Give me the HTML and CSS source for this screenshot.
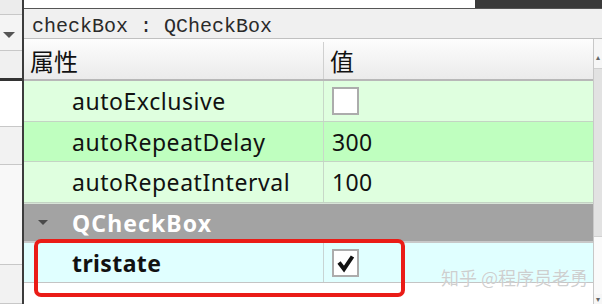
FILE: index.html
```html
<!DOCTYPE html>
<html>
<head>
  <title>属性编辑器</title>
  <link rel="stylesheet" href="styles.css">
</head>
<body>
  <div class="side">
    <div class="side-top"></div>
    <div class="side-combo"><span class="combo-arrow"></span></div>
    <div class="side-gap"></div>
    <div class="side-white"></div>
    <div class="side-row"></div>
    <div class="side-row tall"></div>
    <div class="side-row"></div>
  </div>

  <div class="main">
    <div class="topbar">
      <div class="topbar-field"></div>
      <div class="topbar-dark"></div>
    </div>
    <div class="title">checkBox : QCheckBox</div>

    <div class="grid">
      <div class="table">
        <div class="row head">
          <div class="cell name">属性</div>
          <div class="cell value">值</div>
        </div>
        <div class="row even">
          <div class="cell name">autoExclusive</div>
          <div class="cell value"><span class="check"></span></div>
        </div>
        <div class="row odd">
          <div class="cell name">autoRepeatDelay</div>
          <div class="cell value">300</div>
        </div>
        <div class="row even">
          <div class="cell name">autoRepeatInterval</div>
          <div class="cell value">100</div>
        </div>
        <div class="row group">
          <div class="cell name"><span class="group-arrow"></span>QCheckBox</div>
        </div>
        <div class="row own">
          <div class="cell name">tristate</div>
          <div class="cell value">
            <span class="check">
              <svg width="22" height="22" viewBox="0 0 22 22">
                <path d="M4 10.5 L9 17 L17.5 4.5" fill="none" stroke="#111" stroke-width="4" stroke-linejoin="miter"/>
              </svg>
            </span>
          </div>
        </div>
        <div class="row blank"></div>
      </div>

      <div class="scroll">
        <div class="scroll-up">▴</div>
        <div class="scroll-track"></div>
        <div class="scroll-rest"></div>
        <div class="scroll-down">▾</div>
      </div>
    </div>
  </div>

  <!-- highlight drawn over the tristate row -->
  <div class="marker"></div>
  <div class="watermark">知乎 @程序员老勇</div>
</body>
</html>
```

FILE: styles.css
```css
body {
  margin: 0;
  width: 602px;
  height: 304px;
  overflow: hidden;
  display: flex;
  position: relative;
  font-family: "Noto Sans", "Noto Sans CJK SC", sans-serif;
  color: #111;
  background: #fff;
}

/* left dock strip */
.side {
  width: 22px;
  border-right: 2px solid #3c3c3c;
  display: flex;
  flex-direction: column;
  background: #f0f0f0;
}

.side-top {
  height: 14px;
  background: #ececec;
  border-bottom: 1px solid #c8c8c8;
}

.side-combo {
  height: 35px;
  background: #f4f4f4;
  border-bottom: 1px solid #c8c8c8;
  display: flex;
  align-items: center;
  padding-left: 3px;
}

.combo-arrow {
  width: 0;
  height: 0;
  border-left: 6px solid transparent;
  border-right: 6px solid transparent;
  border-top: 6px solid #555;
  margin-top: 6px;
}

.side-gap {
  height: 28px;
  background: #f0f0f0;
  border-bottom: 3px solid #333;
}

.side-white {
  height: 45px;
  background: #fff;
  border-bottom: 1px solid #c8c8c8;
}

.side-row {
  height: 38px;
  background: #f2f2f2;
  border-bottom: 1px solid #c8c8c8;
}

.side-row.tall {
  height: 100px;
  background: #f8f8f8;
}

/* property editor */
.main {
  flex: 1;
  display: flex;
  flex-direction: column;
}

.topbar {
  height: 8px;
  display: flex;
  border-bottom: 1px solid #555;
}

.topbar-field {
  width: 451px;
  background: #fff;
}

.topbar-dark {
  flex: 1;
  background: #3a3a3a;
}

.title {
  height: 29px;
  line-height: 36px;
  padding-left: 8px;
  background: #f0f0f0;
  border-bottom: 1px solid #c0c0c0;
  font-family: "Liberation Mono", monospace;
  font-size: 20px;
  color: #2a2a2a;
  white-space: pre;
}

.grid {
  flex: 1;
  display: flex;
}

.table {
  width: 569px;
  display: flex;
  flex-direction: column;
}

.row {
  display: flex;
  box-sizing: border-box;
  height: 41px;
  border-bottom: 1px solid #c4d4c4;
  font-size: 23px;
  letter-spacing: 0.55px;
}

.cell {
  box-sizing: border-box;
  display: flex;
  align-items: center;
}

.cell.name {
  width: 300px;
  padding-left: 48px;
  border-right: 1px solid #c8d8c8;
}

.cell.value {
  flex: 1;
  padding-left: 8px;
  letter-spacing: 0.3px;
}

.row.head {
  height: 42px;
  border-bottom: 2px solid #b8b8b8;
  background: linear-gradient(#fdfdfd, #ebebeb);
  font-family: "Noto Sans CJK SC", sans-serif;
  font-size: 24px;
  letter-spacing: 0;
  padding-top: 3px;
}

.row.head .cell.name {
  padding-left: 6px;
  border-right: 1px solid #d0d0d0;
}

.row.head .cell.value {
  padding-left: 6px;
}

.row.even {
  background: #dfffdf;
}

.row.odd {
  height: 40px;
  background: #bfffbf;
}

.row.group {
  height: 40px;
  background: #a3a3a3;
  border-top: 1px solid #d8e4d8;
  border-bottom: 2px solid #c8c8c8;
  color: #fff;
  font-weight: bold;
  letter-spacing: 1.1px;
}

.row.group .cell.name {
  border-right: none;
  position: relative;
}

.group-arrow {
  position: absolute;
  left: 14px;
  top: 16px;
  width: 0;
  height: 0;
  border-left: 5px solid transparent;
  border-right: 5px solid transparent;
  border-top: 5px solid #4a4a4a;
}

.row.own {
  height: 40px;
  background: #e0ffff;
  border-bottom: 1px solid #c4c4c4;
  font-weight: bold;
  letter-spacing: 0.4px;
}

.row.own .cell.name {
  border-right: 1px solid #c8d4d4;
}

.row.blank {
  flex: 1;
  border-bottom: none;
  background: #fff;
}

.check {
  width: 27px;
  height: 28px;
  box-sizing: border-box;
  border: 2px solid #acacac;
  background: #fff;
  display: flex;
  align-items: center;
  justify-content: center;
}

/* scrollbar */
.scroll {
  flex: 1;
  border-left: 1px solid #c8c8c8;
  display: flex;
  flex-direction: column;
  background: #f6f6f6;
  font-size: 8px;
  color: #666;
  text-align: center;
}

.scroll-up {
  height: 29px;
  line-height: 36px;
}

.scroll-track {
  height: 167px;
  background: #e2e2e2;
  border-top: 1px solid #d0d0d0;
  border-bottom: 1px solid #d0d0d0;
}

.scroll-rest {
  flex: 1;
  background: #fafafa;
}

.scroll-down {
  height: 10px;
  line-height: 10px;
}

/* overlays */
.marker {
  position: absolute;
  left: 34px;
  top: 239px;
  width: 371px;
  height: 58px;
  box-sizing: border-box;
  border: 4px solid #ea1c17;
  border-radius: 7px;
}

.watermark {
  position: absolute;
  left: 441px;
  top: 264px;
  font-family: "Noto Sans CJK SC", sans-serif;
  font-size: 18px;
  color: rgba(175, 175, 175, 0.6);
  text-shadow: 0 0 1px rgba(255, 255, 255, 0.9);
}
```
